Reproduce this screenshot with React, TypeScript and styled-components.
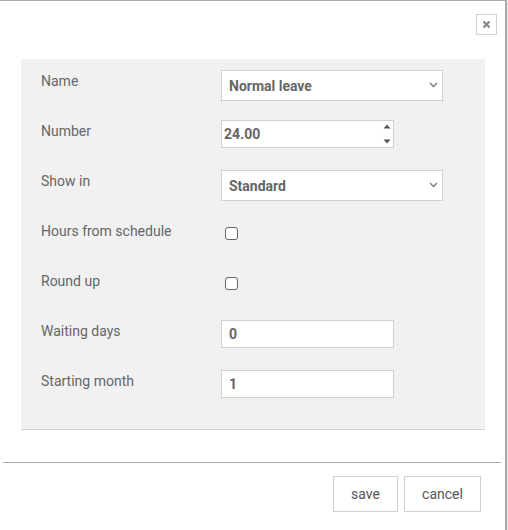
import React, { ReactElement } from 'react';
import styled, { createGlobalStyle } from 'styled-components';

const GlobalStyle = createGlobalStyle`
  html, body {
    margin: 0;
    padding: 0;
    background: #eeeeee;
  }
  body {
    font-family: Roboto, "Liberation Sans", sans-serif;
  }
`;

const Modal = styled.div`
  width: 507px;
  height: 530px;
  box-sizing: border-box;
  background: #fff;
  border-top: 1px solid #a9a9a9;
  border-right: 2px solid #a9a9a9;
`;

const Header = styled.div`
  display: flex;
  justify-content: flex-end;
  padding: 13px 8px 0 0;
  height: 35px;
  box-sizing: border-box;
`;

const CloseButton = styled.button`
  width: 21px;
  height: 21px;
  padding: 0;
  display: flex;
  align-items: center;
  justify-content: center;
  background: #fff;
  border: 1px solid #d0d0d0;
  cursor: pointer;
`;

const Body = styled.div`
  padding: 23px 20px 0 21px;
`;

const Panel = styled.div`
  background: #f1f1f1;
  border-bottom: 1px solid #d2d2d2;
  padding: 11px 20px 9px 20px;
`;

const Row = styled.div`
  display: grid;
  grid-template-columns: 180px 1fr;
  height: 50px;
`;

const Label = styled.label`
  font-size: 14px;
  line-height: 20px;
  padding-top: 1px;
  color: #666;
`;

const Control = styled.div<{ $width?: number }>`
  position: relative;
  width: ${(p) => (p.$width ? `${p.$width}px` : 'auto')};
  height: fit-content;
`;

const Select = styled.select`
  appearance: none;
  width: 222px;
  height: 31px;
  box-sizing: border-box;
  border: 1px solid #d0d0d0;
  background: #fff;
  padding: 0 24px 0 7px;
  font-family: Roboto, "Liberation Sans", sans-serif;
  font-size: 14px;
  font-weight: 700;
  color: #666;
  border-radius: 0;
  outline: none;
`;

const TextInput = styled.input`
  width: 173px;
  height: 28px;
  box-sizing: border-box;
  border: 1px solid #d0d0d0;
  background: #fff;
  padding: 0 4px 0 ${(p) => (p.type === 'number' ? '2px' : '7px')};
  font-family: Roboto, "Liberation Sans", sans-serif;
  font-size: 14px;
  font-weight: 700;
  color: #666;
  border-radius: 0;
  outline: none;
  appearance: textfield;
  &::-webkit-inner-spin-button,
  &::-webkit-outer-spin-button {
    -webkit-appearance: none;
    margin: 0;
  }
`;

const Chevron = styled.svg`
  position: absolute;
  right: 5px;
  top: 12px;
  pointer-events: none;
`;

const Spinner = styled.svg`
  position: absolute;
  right: 2px;
  top: 3px;
  pointer-events: none;
`;

const CheckBox = styled.input`
  margin: 7px 0 0 4px;
  width: 13px;
  height: 13px;
  appearance: none;
  border: 1px solid #666;
  border-radius: 3px;
  background: #fff;
  box-sizing: border-box;
`;

const Divider = styled.hr`
  margin: 32px 4px 0 3px;
  border: none;
  border-top: 1px solid #a9a9a9;
`;

const Footer = styled.div`
  display: flex;
  justify-content: flex-end;
  gap: 6px;
  padding: 13px 24px 0 0;
`;

const Button = styled.button<{ $width: number }>`
  width: ${(p) => p.$width}px;
  height: 36px;
  background: #fff;
  border: 1px solid #d0d0d0;
  font-family: Roboto, "Liberation Sans", sans-serif;
  font-size: 14px;
  color: #555;
  cursor: pointer;
`;

function SelectField({ value, options }: { value: string; options: string[] }): ReactElement {
  return (
    <Control $width={222}>
      <Select defaultValue={value}>
        {options.map((o) => (
          <option key={o}>{o}</option>
        ))}
      </Select>
      <Chevron width="9" height="6" viewBox="0 0 9 6">
        <path d="M1 1l3.5 3.5L8 1" fill="none" stroke="#777" strokeWidth="1.3" />
      </Chevron>
    </Control>
  );
}

export default function App(): ReactElement {
  return (
    <>
      <GlobalStyle />
      <Modal>
        <Header>
          <CloseButton aria-label="close">
            <svg width="9" height="9" viewBox="0 0 9 9">
              <path d="M1.5 1.5l6 6M7.5 1.5l-6 6" stroke="#8a8a8a" strokeWidth="2.4" />
            </svg>
          </CloseButton>
        </Header>
        <Body>
          <Panel>
            <Row>
              <Label>Name</Label>
              <SelectField value="Normal leave" options={['Normal leave', 'Sick leave']} />
            </Row>
            <Row>
              <Label>Number</Label>
              <Control $width={173}>
                <TextInput type="number" defaultValue="24.00" step="0.01" />
                <Spinner width="10" height="22" viewBox="0 0 10 22">
                  <path d="M5 1.5L8.5 5.5H1.5Z" fill="#555" />
                  <path d="M5 20.5L8.5 16.5H1.5Z" fill="#555" />
                </Spinner>
              </Control>
            </Row>
            <Row>
              <Label>Show in</Label>
              <SelectField value="Standard" options={['Standard', 'Other']} />
            </Row>
            <Row>
              <Label>Hours from schedule</Label>
              <div>
                <CheckBox type="checkbox" />
              </div>
            </Row>
            <Row>
              <Label>Round up</Label>
              <div>
                <CheckBox type="checkbox" />
              </div>
            </Row>
            <Row>
              <Label>Waiting days</Label>
              <Control $width={173}>
                <TextInput type="text" defaultValue="0" />
              </Control>
            </Row>
            <Row>
              <Label>Starting month</Label>
              <Control $width={173}>
                <TextInput type="text" defaultValue="1" />
              </Control>
            </Row>
          </Panel>
        </Body>
        <Divider />
        <Footer>
          <Button $width={65}>save</Button>
          <Button $width={77}>cancel</Button>
        </Footer>
      </Modal>
    </>
  );
}
